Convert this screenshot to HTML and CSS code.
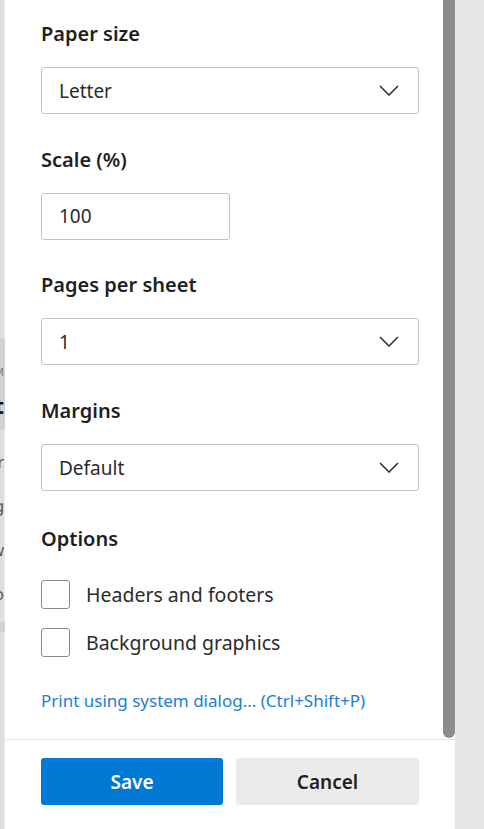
FILE: index.html
```html
<!DOCTYPE html>
<html lang="en">
<head>
<meta charset="utf-8">
<title>Print</title>
<link rel="stylesheet" href="styles.css">
</head>
<body>
<div class="app">
  <div class="edge">
    <div class="edge-gap"></div>
    <div class="edge-band">
      <div class="frag frag-small">PM</div>
      <div class="frag frag-bold">Print</div>
    </div>
    <div class="edge-lines">
      <div class="frag">Printer</div>
      <div class="frag">Destinig</div>
      <div class="frag">Show</div>
      <div class="frag">Layo</div>
    </div>
    <div class="edge-band2"></div>
  </div>

  <div class="main">
    <div class="scroll">
      <div class="content">
        <section class="field">
          <div class="label">Paper size</div>
          <div class="select">
            <span class="value">Letter</span>
            <svg class="chev" width="20" height="11" viewBox="0 0 20 11"><path d="M1 1 L10 10 L19 1" fill="none" stroke="#333" stroke-width="1.6"/></svg>
          </div>
        </section>
        <section class="field">
          <div class="label">Scale (%)</div>
          <div class="input"><span class="value">100</span></div>
        </section>
        <section class="field">
          <div class="label">Pages per sheet</div>
          <div class="select">
            <span class="value">1</span>
            <svg class="chev" width="20" height="11" viewBox="0 0 20 11"><path d="M1 1 L10 10 L19 1" fill="none" stroke="#333" stroke-width="1.6"/></svg>
          </div>
        </section>
        <section class="field field-last">
          <div class="label">Margins</div>
          <div class="select">
            <span class="value">Default</span>
            <svg class="chev" width="20" height="11" viewBox="0 0 20 11"><path d="M1 1 L10 10 L19 1" fill="none" stroke="#333" stroke-width="1.6"/></svg>
          </div>
        </section>
        <section class="options">
          <div class="label">Options</div>
          <div class="checks">
            <label class="check"><span class="box"></span><span class="check-text">Headers and footers</span></label>
            <label class="check"><span class="box"></span><span class="check-text">Background graphics</span></label>
          </div>
        </section>
        <a class="link" href="#">Print using system dialog... (Ctrl+Shift+P)</a>
      </div>
      <div class="scrollbar"><div class="thumb"></div></div>
    </div>
    <div class="footer">
      <button class="btn btn-primary">Save</button>
      <button class="btn btn-secondary">Cancel</button>
    </div>
  </div>

  <div class="backdrop"></div>
</div>
</body>
</html>
```

FILE: styles.css
```css
html, body {
  margin: 0;
  padding: 0;
}

body {
  width: 484px;
  height: 829px;
  overflow: hidden;
  font-family: "Noto Sans", "Open Sans", sans-serif;
  color: #1f1f1f;
  background: #e6e6e6;
}

.app {
  display: flex;
  height: 829px;
}

/* left sliver of the page behind the dialog */
.edge {
  width: 5px;
  flex: none;
  background: #dedede;
  overflow: hidden;
  display: flex;
  flex-direction: column;
  box-shadow: inset -1px 0 0 #ececec;
}

.edge-gap {
  height: 338px;
  flex: none;
}

.edge-band {
  height: 92px;
  flex: none;
  background: #d2d2d2;
  display: flex;
  flex-direction: column;
  padding-top: 28px;
  box-sizing: border-box;
}

.edge-lines {
  height: 192px;
  flex: none;
  padding-top: 22px;
  box-sizing: border-box;
  display: flex;
  flex-direction: column;
  gap: 24px;
}

.edge-band2 {
  height: 10px;
  flex: none;
  background: #d2d2d2;
}

.frag {
  direction: rtl;
  white-space: nowrap;
  font-size: 16px;
  line-height: 20px;
  color: #555;
  margin-right: 1px;
}

.frag-small {
  font-size: 11px;
  line-height: 12px;
  color: #777;
}

.frag-bold {
  font-size: 22px;
  line-height: 26px;
  font-weight: 700;
  color: #111;
  margin-top: 14px;
}

.main {
  width: 450px;
  flex: none;
  display: flex;
  flex-direction: column;
  background: #fff;
}

.scroll {
  height: 739px;
  flex: none;
  display: flex;
  border-bottom: 1px solid #e6e6e6;
}

.content {
  width: 438px;
  flex: none;
  box-sizing: border-box;
  padding: 20px 24px 0 36px;
}

.field {
  margin-bottom: 31.7px;
}

.field-last {
  margin-bottom: 34px;
}

.label {
  font-size: 20px;
  line-height: 28px;
  font-weight: 600;
  color: #1f1f1f;
  margin-bottom: 19px;
}

.select,
.input {
  height: 47px;
  box-sizing: border-box;
  border: 1px solid #c2c2c2;
  border-radius: 3px;
  display: flex;
  align-items: center;
  padding: 0 19px 0 17px;
}

.select {
  justify-content: space-between;
}

.input {
  width: 189px;
}

.value {
  font-size: 19px;
  color: #2b2b2b;
}

.chev {
  display: block;
}

.options .label {
  margin-bottom: 27px;
}

.checks {
  display: flex;
  flex-direction: column;
  gap: 19px;
}

.check {
  display: flex;
  align-items: center;
  gap: 16px;
  height: 29px;
}

.box {
  width: 29px;
  height: 29px;
  box-sizing: border-box;
  border: 1px solid #8a8a8a;
  border-radius: 3px;
  flex: none;
}

.check-text {
  font-size: 19.5px;
  color: #2b2b2b;
}

.link {
  display: block;
  margin-top: 33px;
  font-size: 17px;
  line-height: 22px;
  color: #1b7dd5;
  text-decoration: none;
}

.scrollbar {
  width: 12px;
  flex: none;
}

.thumb {
  height: 738px;
  background: #8c8c8c;
  border-radius: 0 0 6px 6px;
}

.footer {
  display: flex;
  gap: 13px;
  padding: 18px 0 0 36px;
}

.btn {
  width: 182px;
  height: 47px;
  border: none;
  border-radius: 3px;
  font-family: "Noto Sans", "Open Sans", sans-serif;
  font-size: 19px;
  font-weight: 600;
  padding: 0;
}

.btn-primary {
  background: #0078d4;
  color: #fff;
}

.btn-secondary {
  width: 183px;
  background: #ebebeb;
  color: #1f1f1f;
}

.backdrop {
  flex: 1;
  background: #e6e6e6;
}
```
